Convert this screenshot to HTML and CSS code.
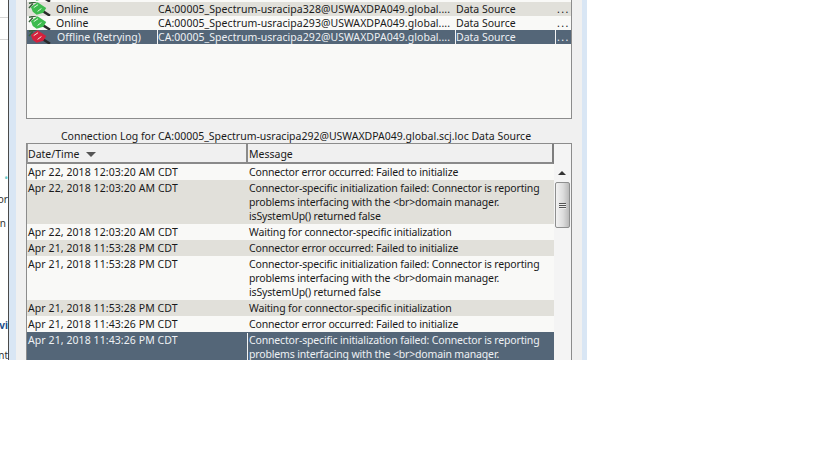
FILE: index.html
```html
<!DOCTYPE html>
<html lang="en">
<head>
<meta charset="utf-8">
<title>Connection Log</title>
<link rel="stylesheet" href="styles.css">
</head>
<body>
<svg class="defs" width="0" height="0" aria-hidden="true">
  <symbol id="plug" viewBox="0 0 24 16">
    <path d="M15 10 L23 15" stroke="#2a2a2a" stroke-width="2.6" fill="none"/>
    <path d="M1 2 L9 0.5 M1 7 L5 2.5" stroke="#37603a" stroke-width="1.5" fill="none"/>
    <path d="M3 6 L10 1 L19 7 L16 12 L9 14 L5 11 Z" fill="currentColor"/>
    <path d="M6 6.5 L10.5 3.5 M10 10.5 L14 7.5" stroke="#eaf8e6" stroke-width="1" fill="none"/>
  </symbol>
</svg>
<div class="window">
  <div class="behind">
    <div class="rule r1"></div>
    <div class="rule r2"></div>
    <span class="frag f1">•</span>
    <span class="frag f2">or</span>
    <span class="frag f3">n</span>
    <span class="frag f4">vi</span>
    <span class="frag f5">nt</span>
  </div>
  <div class="edge"></div>
  <div class="panel">
    <div class="status-table">
      <div class="srow peek"><svg class="ico green"><use href="#plug"/></svg></div>
      <div class="srow alt">
        <div class="c1"><svg class="ico green"><use href="#plug"/></svg>Online</div>
        <div class="c2">CA:00005_Spectrum-usracipa328@USWAXDPA049.global....</div>
        <div class="c3">Data Source</div><div class="c4">...</div>
      </div>
      <div class="srow">
        <div class="c1"><svg class="ico green"><use href="#plug"/></svg>Online</div>
        <div class="c2">CA:00005_Spectrum-usracipa293@USWAXDPA049.global....</div>
        <div class="c3">Data Source</div><div class="c4">...</div>
      </div>
      <div class="srow sel">
        <div class="c1"><svg class="ico red"><use href="#plug"/></svg><span class="off">Offline (Retrying)</span></div>
        <div class="c2">CA:00005_Spectrum-usracipa292@USWAXDPA049.global....</div>
        <div class="c3">Data Source</div><div class="c4">...</div>
      </div>
    </div>
    <div class="log-title">Connection Log for CA:00005_Spectrum-usracipa292@USWAXDPA049.global.scj.loc Data Source</div>
    <div class="log">
      <div class="log-main">
        <div class="head">
          <div class="h1">Date/Time<span class="sort"></span></div>
          <div class="h2">Message</div>
        </div>
        <div class="lrow h1l"><div>Apr 22, 2018 12:03:20 AM CDT</div><div>Connector error occurred: Failed to initialize</div></div>
        <div class="lrow alt h3l"><div>Apr 22, 2018 12:03:20 AM CDT</div><div>Connector-specific initialization failed: Connector is reporting problems interfacing with the &lt;br&gt;domain manager. isSystemUp() returned false</div></div>
        <div class="lrow h1l"><div>Apr 22, 2018 12:03:20 AM CDT</div><div>Waiting for connector-specific initialization</div></div>
        <div class="lrow alt h1l"><div>Apr 21, 2018 11:53:28 PM CDT</div><div>Connector error occurred: Failed to initialize</div></div>
        <div class="lrow h3l"><div>Apr 21, 2018 11:53:28 PM CDT</div><div>Connector-specific initialization failed: Connector is reporting problems interfacing with the &lt;br&gt;domain manager. isSystemUp() returned false</div></div>
        <div class="lrow alt h1l"><div>Apr 21, 2018 11:53:28 PM CDT</div><div>Waiting for connector-specific initialization</div></div>
        <div class="lrow h1l"><div>Apr 21, 2018 11:43:26 PM CDT</div><div>Connector error occurred: Failed to initialize</div></div>
        <div class="lrow sel h3l"><div>Apr 21, 2018 11:43:26 PM CDT</div><div>Connector-specific initialization failed: Connector is reporting problems interfacing with the &lt;br&gt;domain manager. isSystemUp() returned false</div></div>
      </div>
      <div class="scroll">
        <div class="arrow"></div>
        <div class="thumb"><span></span><span></span><span></span></div>
      </div>
    </div>
  </div>
  <div class="edge-r"></div>
</div>
</body>
</html>
```
FILE: styles.css
```css
html, body {
  margin: 0;
  padding: 0;
  background: #fff;
  overflow: hidden;
}
body {
  width: 819px;
  height: 460px;
  font-family: "Noto Sans", "Open Sans", sans-serif;
  font-size: 10.5px;
  color: #1a1a1a;
}
.defs { display: block; height: 0; }
.window {
  display: flex;
  width: 587px;
  height: 360px;
  overflow: hidden;
}
.behind {
  position: relative;
  width: 8px;
  flex: none;
  overflow: hidden;
  background: #fff;
  border-right: 1px solid #4a4a4a;
}
.rule { position: absolute; left: 0; right: 0; height: 1px; background: #d6d6d6; }
.r1 { top: 17px; }
.r2 { top: 39px; }
.frag { position: absolute; right: 0; font-size: 10px; line-height: 12px; white-space: nowrap; color: #333; }
.f1 { top: 172px; color: #6cc; }
.f2 { top: 193px; }
.f3 { top: 217px; right: 2px; }
.f4 { top: 319px; color: #1d4f8a; font-weight: 700; }
.f5 { top: 349px; }
.edge { width: 7px; flex: none; background: #d9e6f4; }
.edge-r { width: 5px; flex: none; background: #d9e6f4; }
.panel {
  flex: 1;
  min-width: 0;
  background: #f0f0f0;
  padding: 0 10px;
}
.status-table {
  height: 119px;
  box-sizing: border-box;
  width: 546px;
  background: #f9f9f7;
  border: 1px solid #8c8c8c;
  border-top: 0;
  overflow: hidden;
}
.srow {
  display: grid;
  grid-template-columns: 130px 297px 99px 15px;
  column-gap: 1px;
  height: 14px;
  line-height: 14px;
  white-space: nowrap;
  width: 545px;
}
.srow > div { overflow: hidden; }
.srow.peek { height: 2px; position: relative; overflow: hidden; }
.peek .ico { margin-top: -13px; }
.srow.alt { background: #e1e0da; }
.srow.sel { background: #546678; color: #eef1f4; }
.srow.sel > div + div { box-shadow: -1px 0 0 #f4f4f4; }
.c1 { display: flex; align-items: center; }
.c2 { letter-spacing: 0.05px; }
.c4 { letter-spacing: 1.4px; padding-left: 1px; }
.ico { width: 23px; height: 16px; margin: -1px 5px 0 1px; flex: none; }
.green { color: #3dbb4e; }
.red { color: #d5213c; }
.off { margin-left: 1px; }
.log-title {
  height: 24px;
  line-height: 34px;
  text-align: center;
  width: 540px;
  white-space: nowrap;
}
.log {
  display: flex;
  width: 546px;
  box-sizing: border-box;
  height: 240px;
  border: 1px solid #8c8c8c;
  border-bottom: 0;
  background: #fff;
}
.log-main { width: 527px; flex: none; }
.head {
  display: grid;
  grid-template-columns: 218px 1fr;
  height: 20px;
  line-height: 20px;
  box-sizing: border-box;
  background: #f0f0f0;
  border: 1px solid #9a9a9a;
  border-right: 2px solid #7d7d7d;
  border-bottom: 2px solid #8a8a8a;
  border-top: 0;
}
.h1 { padding-left: 0; display: flex; align-items: center; }
.h2 { padding-left: 1px; border-left: 2px solid #8a8a8a; }
.sort {
  width: 0; height: 0;
  margin-left: 7px;
  border-left: 5px solid transparent;
  border-right: 5px solid transparent;
  border-top: 5px solid #555;
}
.lrow {
  display: grid;
  grid-template-columns: 221px 1fr;
  line-height: 14px;
  box-sizing: border-box;
  padding-top: 1px;
  background: #f9f9f7;
}
.lrow > div { padding: 0 8px 0 1px; letter-spacing: 0.08px; }
.lrow > div + div { padding-left: 1px; padding-right: 8px; letter-spacing: -0.16px; }
.lrow.alt { background: #e1e0da; }
.lrow.sel { background: #546678; color: #eef1f4; }
.lrow.sel > div + div { box-shadow: -1px 0 0 #f4f4f4; }
.h1l { height: 16px; }
.h3l { height: 44px; }
.scroll {
  flex: 1;
  background: #f4f4f4;
  position: relative;
  padding: 25px 1px 0 1px;
}
.arrow {
  position: absolute;
  top: 27px;
  left: 4px;
  width: 0; height: 0;
  border-left: 4px solid transparent;
  border-right: 4px solid transparent;
  border-bottom: 4px solid #333;
}
.thumb {
  margin-top: 13px;
  height: 46px;
  box-sizing: border-box;
  border: 1px solid #8e8f8f;
  border-radius: 2px;
  background: linear-gradient(to right, #f2f2f2, #dcdcdc 55%, #b9b9b9);
  display: flex;
  flex-direction: column;
  align-items: center;
  justify-content: center;
  gap: 1px;
}
.thumb span { display: block; width: 7px; height: 1px; background: #555; box-shadow: 0 1px 0 #eee; }
```
